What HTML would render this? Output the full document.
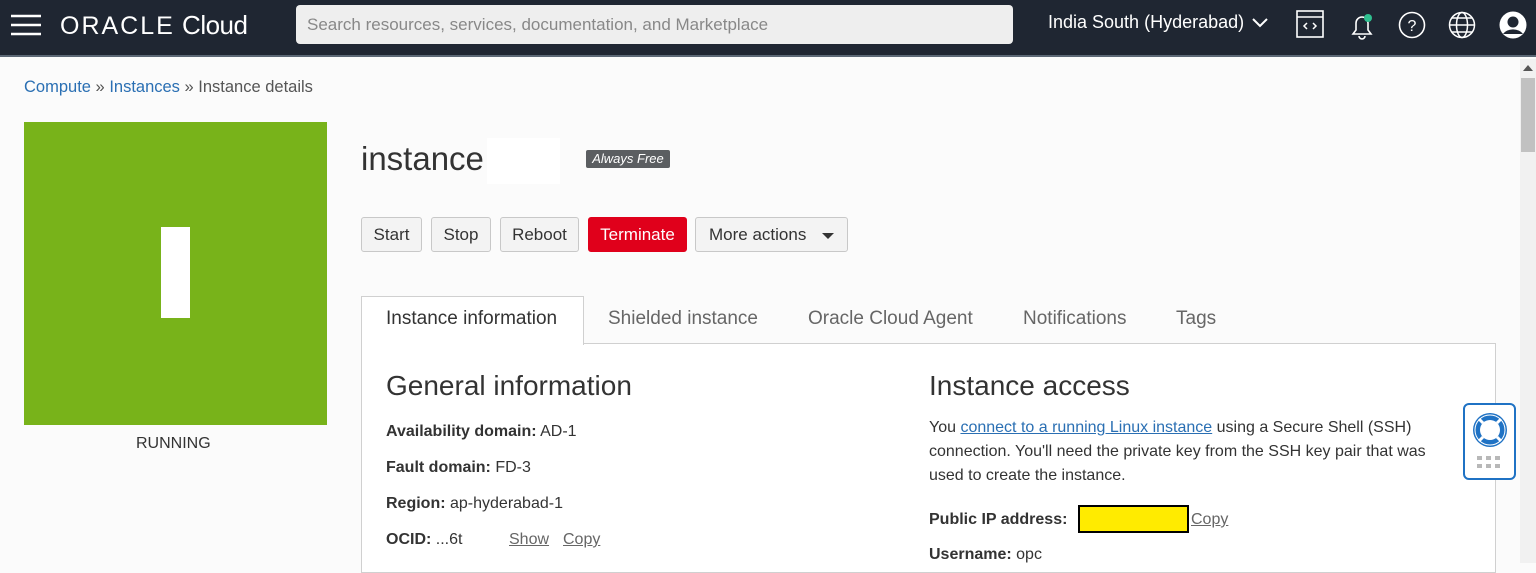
<!DOCTYPE html>
<html><head><meta charset="utf-8"><style>
*{margin:0;padding:0;box-sizing:border-box}
body{width:1536px;height:563px;overflow:hidden;background:#fbfbfb;font-family:"Liberation Sans",sans-serif;color:#333;position:relative}
.a{position:absolute;white-space:nowrap}
.hdr{position:absolute;left:0;top:0;width:1536px;height:57px;background:#1f2632;border-bottom:2px solid #5b6775}
.btn{position:absolute;top:217px;height:35px;border:1px solid #c8c8c8;border-radius:3px;background:#f3f3f3;font-size:17px;line-height:33px;text-align:center;color:#333}
.tab{position:absolute;top:308px;font-size:19px;color:#666}
.lbl{font-size:16px;color:#333}
.lbl b{color:#333}
a{color:#2a6fb3}
</style></head><body>
<div class="hdr">
 <svg class="a" style="left:10px;top:13px" width="32" height="24"><g stroke="#fff" stroke-width="2.6"><line x1="1" y1="3" x2="31" y2="3"/><line x1="1" y1="12" x2="31" y2="12"/><line x1="1" y1="21" x2="31" y2="21"/></g></svg>
 <div class="a" style="left:60px;top:10px;font-size:26px;color:#fff"><span style="font-weight:normal;letter-spacing:2px;font-size:25px">ORACLE</span> <span style="font-weight:normal;letter-spacing:-0.5px">Cloud</span></div>
 <div class="a" style="left:296px;top:5px;width:717px;height:39px;background:#eeeeee;border-radius:4px"></div>
 <div class="a" style="left:307px;top:15px;font-size:17px;color:#888">Search resources, services, documentation, and Marketplace</div>
 <div class="a" style="left:1048px;top:12px;font-size:18px;color:#fff">India South (Hyderabad)</div>
 <svg class="a" style="left:1251px;top:17px" width="18" height="12"><path d="M2 2l7 7 7-7" stroke="#fff" stroke-width="2" fill="none"/></svg>
 <svg class="a" style="left:1295px;top:9px" width="30" height="30"><rect x="2" y="2" width="26" height="26" fill="none" stroke="#fff" stroke-width="1.6"/><line x1="2" y1="8" x2="28" y2="8" stroke="#fff" stroke-width="1.6"/><path d="M12 14l-3 3 3 3M18 14l3 3-3 3" stroke="#fff" stroke-width="1.5" fill="none"/></svg>
 <svg class="a" style="left:1347px;top:9px" width="30" height="32"><path d="M6 25h18l-3-4V14a6 6 0 0 0-12 0v7z" fill="none" stroke="#fff" stroke-width="1.6"/><path d="M12 27a3 3 0 0 0 6 0" fill="none" stroke="#fff" stroke-width="1.6"/><circle cx="21" cy="9" r="4" fill="#2fbf8f"/></svg>
 <svg class="a" style="left:1397px;top:10px" width="30" height="30"><circle cx="15" cy="15" r="12.5" fill="none" stroke="#fff" stroke-width="1.6"/><text x="15" y="21" font-size="16" text-anchor="middle" fill="#fff" font-family="Liberation Sans">?</text></svg>
 <svg class="a" style="left:1447px;top:10px" width="30" height="30"><g fill="none" stroke="#fff" stroke-width="1.5"><circle cx="15" cy="15" r="12.5"/><ellipse cx="15" cy="15" rx="5.5" ry="12.5"/><line x1="2.5" y1="15" x2="27.5" y2="15"/><path d="M5 8h20M5 22h20"/></g></svg>
 <svg class="a" style="left:1498px;top:10px" width="30" height="30"><circle cx="15" cy="15" r="13.5" fill="#fff"/><circle cx="15" cy="12" r="5.5" fill="#1f2632"/><path d="M5 24a11 8 0 0 1 20 0" fill="#1f2632"/></svg>
</div>
<div class="a" style="left:1520px;top:59px;width:16px;height:504px;background:#f1f1f1"></div>
<div class="a" style="left:1521px;top:78px;width:14px;height:74px;background:#c1c1c1"></div>
<svg class="a" style="left:1523px;top:64px" width="10" height="8"><path d="M0 7L5 1 10 7z" fill="#555"/></svg>

<div class="a" style="left:24px;top:78px;font-size:16.5px;color:#555"><span style="color:#2a6fb3">Compute</span> » <span style="color:#2a6fb3">Instances</span> » Instance details</div>

<div class="a" style="left:24px;top:122px;width:303px;height:303px;background:#78b31a"></div>
<div class="a" style="left:161px;top:227px;width:29px;height:91px;background:#fff"></div>
<div class="a" style="left:136px;top:435px;font-size:16px;color:#333">RUNNING</div>

<div class="a" style="left:361px;top:140px;font-size:33px;color:#333">instance</div>
<div class="a" style="left:487px;top:138px;width:73px;height:46px;background:#fff"></div>
<div class="a" style="left:586px;top:150px;width:84px;height:18px;background:#5b5e61;border-radius:2px;color:#fff;font-size:13px;font-style:italic;line-height:18px;text-align:center">Always Free</div>

<div class="btn" style="left:361px;width:61px">Start</div>
<div class="btn" style="left:431px;width:60px">Stop</div>
<div class="btn" style="left:500px;width:79px">Reboot</div>
<div class="btn" style="left:588px;width:99px;background:#e0001b;border-color:#e0001b;color:#fff">Terminate</div>
<div class="btn" style="left:695px;width:153px;text-align:left;padding-left:13px">More actions <svg width="14" height="8" style="margin-left:10px;vertical-align:middle"><path d="M1 1h12L7 7z" fill="#333"/></svg></div>

<div class="a" style="left:361px;top:343px;width:1135px;height:230px;background:#fff;border:1px solid #d0d0d0"></div>
<div class="a" style="left:361px;top:296px;width:223px;height:49px;background:#fff;border:1px solid #d0d0d0;border-bottom:none"></div>
<div class="tab" style="left:386px;color:#333">Instance information</div>
<div class="tab" style="left:608px">Shielded instance</div>
<div class="tab" style="left:808px">Oracle Cloud Agent</div>
<div class="tab" style="left:1023px">Notifications</div>
<div class="tab" style="left:1176px">Tags</div>

<div class="a" style="left:386px;top:370px;font-size:28px;color:#333">General information</div>
<div class="a lbl" style="left:386px;top:423px"><b>Availability domain:</b> AD-1</div>
<div class="a lbl" style="left:386px;top:459px"><b>Fault domain:</b> FD-3</div>
<div class="a lbl" style="left:386px;top:495px"><b>Region:</b> ap-hyderabad-1</div>
<div class="a lbl" style="left:386px;top:531px"><b>OCID:</b> ...6t</div>
<div class="a lbl" style="left:509px;top:531px;color:#666;text-decoration:underline">Show</div>
<div class="a lbl" style="left:563px;top:531px;color:#666;text-decoration:underline">Copy</div>

<div class="a" style="left:929px;top:370px;font-size:28px;color:#333">Instance access</div>
<div class="a lbl" style="left:929px;top:416px;line-height:24px;white-space:normal;width:530px">You <a href="#" style="color:#2a6fb3">connect to a running Linux instance</a> using a Secure Shell (SSH) connection. You'll need the private key from the SSH key pair that was used to create the instance.</div>
<div class="a lbl" style="left:929px;top:511px"><b>Public IP address:</b></div>
<div class="a" style="left:1078px;top:505px;width:111px;height:28px;background:#ffeb00;border:2px solid #000"></div>
<div class="a lbl" style="left:1191px;top:511px;color:#666;text-decoration:underline">Copy</div>
<div class="a lbl" style="left:929px;top:546px"><b>Username:</b> opc</div>

<div class="a" style="left:1463px;top:403px;width:53px;height:77px;background:#fff;border:2px solid #1f72c4;border-radius:6px"></div>
<svg class="a" style="left:1470px;top:410px" width="40" height="40"><circle cx="20" cy="20" r="17" fill="#1f72c4"/><circle cx="20" cy="20" r="10" fill="#fff"/><g stroke="#fff" stroke-width="3"><line x1="9" y1="9" x2="13" y2="13"/><line x1="31" y1="9" x2="27" y2="13"/><line x1="9" y1="31" x2="13" y2="27"/><line x1="31" y1="31" x2="27" y2="27"/></g><circle cx="20" cy="20" r="15" fill="none" stroke="#fff" stroke-width="1"/></svg>
<svg class="a" style="left:1476px;top:455px" width="28" height="16"><g fill="#b8b8b8"><rect x="1" y="1" width="5" height="4"/><rect x="10" y="1" width="5" height="4"/><rect x="19" y="1" width="5" height="4"/><rect x="1" y="9" width="5" height="4"/><rect x="10" y="9" width="5" height="4"/><rect x="19" y="9" width="5" height="4"/></g></svg>
</body></html>
